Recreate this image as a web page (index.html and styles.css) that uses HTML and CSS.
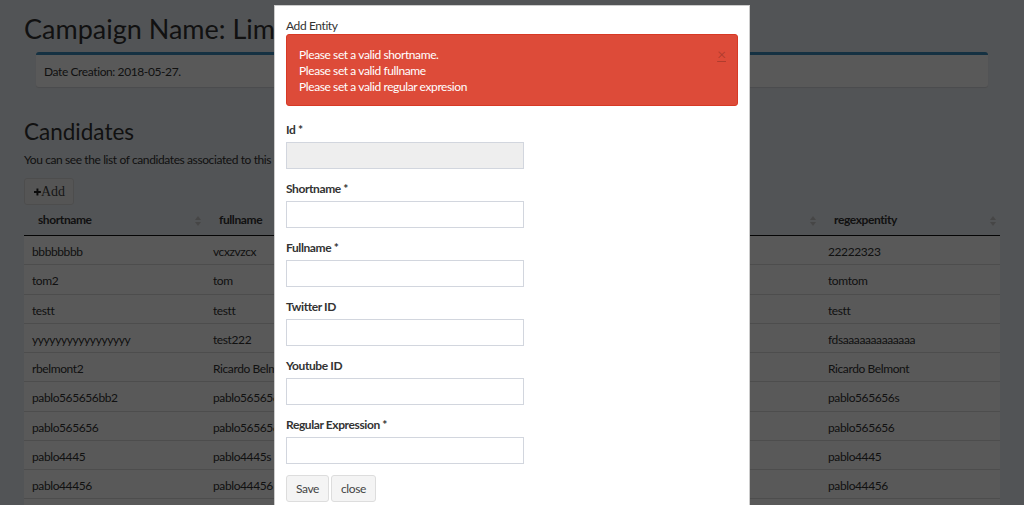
FILE: index.html
```html
<!DOCTYPE html>
<html lang="en">
<head>
    <meta charset="UTF-8">
    <meta name="viewport" content="width=device-width, initial-scale=1.0">
    <title>Campaign</title>
    <link rel="stylesheet" href="styles.css">
</head>
<body>

<div class="content">
    <h1 class="page-title">Campaign Name: Limpieza</h1>
    <div class="box-row">
        <div class="box">Date Creation: 2018-05-27.</div>
    </div>

    <h2 class="section-title">Candidates</h2>
    <p class="section-text">You can see the list of candidates associated to this campaign.</p>

    <button class="btn btn-add"><svg class="plus" width="12" height="12" viewBox="0 0 12 12"><path d="M4.3 0h3.4v4.3H12v3.4H7.7V12H4.3V7.7H0V4.3h4.3z"/></svg>Add</button>

    <table class="grid">
        <colgroup>
            <col class="c-short">
            <col class="c-mid">
            <col class="c-mid">
            <col class="c-mid">
            <col class="c-regex">
        </colgroup>
        <thead>
        <tr>
            <th>shortname<span class="sort"></span></th>
            <th>fullname<span class="sort"></span></th>
            <th>twitterid<span class="sort"></span></th>
            <th>youtubeid<span class="sort"></span></th>
            <th>regexpentity<span class="sort"></span></th>
        </tr>
        </thead>
        <tbody>
        <tr><td>bbbbbbbb</td><td>vcxzvzcx</td><td></td><td></td><td>22222323</td></tr>
        <tr><td>tom2</td><td>tom</td><td></td><td></td><td>tomtom</td></tr>
        <tr><td>testt</td><td>testt</td><td></td><td></td><td>testt</td></tr>
        <tr><td>yyyyyyyyyyyyyyyyy</td><td>test222</td><td></td><td></td><td>fdsaaaaaaaaaaaaa</td></tr>
        <tr><td>rbelmont2</td><td>Ricardo Belmont</td><td></td><td></td><td>Ricardo Belmont</td></tr>
        <tr><td>pablo565656bb2</td><td>pablo565656bb2</td><td></td><td></td><td>pablo565656s</td></tr>
        <tr><td>pablo565656</td><td>pablo565656</td><td></td><td></td><td>pablo565656</td></tr>
        <tr><td>pablo4445</td><td>pablo4445s</td><td></td><td></td><td>pablo4445</td></tr>
        <tr><td>pablo44456</td><td>pablo44456</td><td></td><td></td><td>pablo44456</td></tr>
        <tr><td>pablo4</td><td>pablo4</td><td></td><td></td><td>pablo4</td></tr>
        </tbody>
    </table>
</div>

<div class="backdrop">
    <div class="modal">
        <div class="modal-title">Add Entity</div>
        <div class="alert">
            <a class="alert-close">&times;</a>
            <div>Please set a valid shortname.</div>
            <div>Please set a valid fullname</div>
            <div>Please set a valid regular expresion</div>
        </div>
        <form class="entity-form">
            <div class="form-group">
                <label>Id *</label>
                <input type="text" class="field" disabled>
            </div>
            <div class="form-group">
                <label>Shortname *</label>
                <input type="text" class="field">
            </div>
            <div class="form-group">
                <label>Fullname *</label>
                <input type="text" class="field">
            </div>
            <div class="form-group">
                <label>Twitter ID</label>
                <input type="text" class="field">
            </div>
            <div class="form-group">
                <label>Youtube ID</label>
                <input type="text" class="field">
            </div>
            <div class="form-group">
                <label>Regular Expression *</label>
                <input type="text" class="field">
            </div>
            <div class="actions">
                <button type="button" class="btn">Save</button>
                <button type="button" class="btn">close</button>
            </div>
        </form>
    </div>
</div>

</body>
</html>
```

FILE: styles.css
```css
* {
    box-sizing: border-box;
}
html, body {
    height: 100%;
}
body {
    margin: 0;
    overflow: hidden;
    background-color: #ecf0f5;
    color: #333;
    font-family: Lato, "Open Sans", sans-serif;
    font-size: 12px;
    letter-spacing: -0.4px;
}
.content {
    padding: 0 24px;
}
.page-title {
    margin: 0;
    padding-top: 11px;
    font-size: 27px;
    font-weight: normal;
    line-height: 36px;
    letter-spacing: 0;
}
.box-row {
    padding: 5px 12px 0;
}
.box {
    background-color: #fff;
    border-top: 3px solid #3c8dbc;
    border-radius: 3px;
    height: 35px;
    padding: 9px 8px;
    line-height: 16px;
    box-shadow: 0 1px 1px rgba(0, 0, 0, .1);
}
.section-title {
    margin: 32px 0 0;
    font-size: 22.5px;
    font-weight: normal;
    line-height: 26px;
    letter-spacing: 0;
}
.section-text {
    margin: 7px 0 10px;
    line-height: 16px;
}
.btn {
    background-color: #f4f4f4;
    border: 1px solid #ddd;
    border-radius: 3px;
    color: #444;
    font-family: Lato, "Open Sans", sans-serif;
    font-size: 12px;
    letter-spacing: -0.4px;
    height: 27px;
    padding: 0 9px;
    margin: 0;
}
.btn-add {
    display: flex;
    align-items: center;
    width: 50px;
    padding: 0 8px 0 9px;
    font-family: "Liberation Serif", serif;
    font-size: 14px;
    letter-spacing: 0;
}
.plus {
    fill: #222;
}
.grid {
    width: 976px;
    border-collapse: collapse;
    table-layout: fixed;
    margin-top: 3px;
    background-color: #fff;
}
.c-short {
    width: 181px;
}
.c-mid {
    width: 205px;
}
.c-regex {
    width: 180px;
}
.grid th {
    position: relative;
    text-align: left;
    font-weight: bold;
    padding: 4px 14px 7px;
    line-height: 16px;
    border-bottom: 1px solid #111;
    background-color: #ecf0f5;
}
.grid td {
    padding: 8px 8px 4px;
    line-height: 16px;
    height: 29.25px;
    border-top: 1px solid #ddd;
    white-space: nowrap;
    overflow: hidden;
}
.sort {
    position: absolute;
    right: 4px;
    top: 8px;
    width: 6px;
    height: 10px;
    border-left: 3px solid transparent;
    border-right: 3px solid transparent;
}
.sort:before, .sort:after {
    content: '';
    position: absolute;
    left: -3px;
    border-left: 3px solid transparent;
    border-right: 3px solid transparent;
}
.sort:before {
    top: 0;
    border-bottom: 4px solid #c8c8c8;
}
.sort:after {
    bottom: 0;
    border-top: 4px solid #c8c8c8;
}
.backdrop {
    position: fixed;
    top: 0;
    left: 0;
    right: 0;
    bottom: 0;
    background-color: rgba(0, 0, 0, .65);
}
.modal {
    width: 476px;
    margin: 5px auto 0;
    background-color: #fff;
    border: 1px solid rgba(0, 0, 0, .2);
    padding: 12px 11px 20px;
    height: 520px;
}
.modal-title {
    line-height: 16px;
}
.alert {
    position: relative;
    background-color: #dd4b39;
    border: 1px solid #d73925;
    border-radius: 3px;
    color: #fff;
    height: 72px;
    padding: 12px 12px 10px;
    line-height: 16px;
}
.alert-close {
    position: absolute;
    top: 11px;
    right: 11px;
    font-size: 16px;
    line-height: 16px;
    color: rgba(0, 0, 0, .2);
    text-decoration: underline;
}
.entity-form {
    margin-top: 16px;
}
.form-group {
    margin-bottom: 12px;
}
.form-group label {
    display: block;
    font-weight: bold;
    line-height: 16px;
    margin-bottom: 4px;
}
.field {
    display: block;
    width: 238px;
    height: 27px;
    border: 1px solid #d2d6de;
    background-color: #fff;
    border-radius: 0;
    margin: 0;
}
.field:disabled {
    background-color: #eee;
}
.actions {
    display: flex;
    gap: 2px;
    margin-top: -1px;
}
```
